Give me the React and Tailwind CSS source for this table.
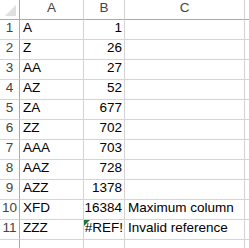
const rows = [
  ['A', '1', ''],
  ['Z', '26', ''],
  ['AA', '27', ''],
  ['AZ', '52', ''],
  ['ZA', '677', ''],
  ['ZZ', '702', ''],
  ['AAA', '703', ''],
  ['AAZ', '728', ''],
  ['AZZ', '1378', ''],
  ['XFD', '16384', 'Maximum column'],
  ['ZZZ', '#REF!', 'Invalid reference'],
];

function App() {
  return (
    <div className="w-[249px] h-[248px] overflow-hidden bg-white text-black" style={{ fontFamily: '"Liberation Sans", Arial, sans-serif' }}>
      <div className="grid grid-cols-[20px_64px_41px_120px_20px] auto-rows-[20px] text-[13.5px]">
        {/* Header */}
        <div className="relative border-r border-b border-[#ababab] bg-white">
          <div className="absolute right-[3px] bottom-[3px] w-0 h-0 border-l-[11px] border-l-transparent border-b-[11px] border-b-[#dfdfdf]" />
        </div>
        {['A', 'B', 'C', ''].map((h, i) => (
          <div key={i} className="flex items-end justify-center pb-[1px] border-r border-b border-r-[#d4d4d4] border-b-[#ababab] text-[#444]">
            {h}
          </div>
        ))}

        {rows.map((r, i) => (
          <Row key={i} n={i + 1} cells={r} />
        ))}
        <div className="border-r border-[#ababab]" />
        <div className="border-r border-[#d4d4d4]" />
        <div className="border-r border-[#d4d4d4]" />
        <div className="border-r border-[#d4d4d4]" />
        <div />
      </div>
    </div>
  );
}

function Row({ n, cells }) {
  const [a, b, c] = cells;
  return (
    <>
      <div className="flex items-end justify-center pb-[1px] border-r border-b border-r-[#ababab] border-b-[#d4d4d4] text-[#444]">
        {n}
      </div>
      <div className="flex items-end pl-[3px] pb-[1px] border-r border-b border-[#d4d4d4]">{a}</div>
      <div className={`relative flex items-end pb-[1px] border-r border-b border-[#d4d4d4] ${b === '#REF!' ? 'justify-center' : 'justify-end pr-[2px]'}`}>
        {b === '#REF!' && (
          <div className="absolute left-0 top-0 w-0 h-0 border-t-[6px] border-t-[#217346] border-r-[6px] border-r-transparent" />
        )}
        {b}
      </div>
      <div className="flex items-end pl-[3px] pb-[1px] border-r border-b border-[#d4d4d4] whitespace-nowrap">{c}</div>
      <div className="border-b border-[#d4d4d4]" />
    </>
  );
}

export default App;
